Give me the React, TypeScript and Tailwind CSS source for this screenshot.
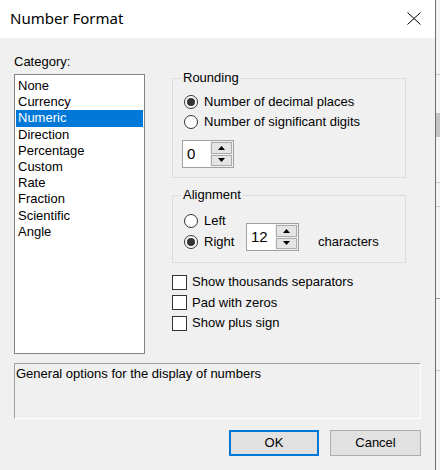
const items = ["None", "Currency", "Numeric", "Direction", "Percentage", "Custom", "Rate", "Fraction", "Scientific", "Angle"];

function Radio({ checked }: { checked?: boolean }) {
  return (
    <span className="w-[14px] h-[14px] rounded-full border border-[#333333] bg-white flex items-center justify-center shrink-0">
      {checked && <span className="w-[8px] h-[8px] rounded-full bg-[#333333]" />}
    </span>
  );
}

function Arrow({ up }: { up?: boolean }) {
  return (
    <svg width="7" height="4" viewBox="0 0 7 4">
      <path d={up ? "M0 4 L3.5 0 L7 4 Z" : "M0 0 L7 0 L3.5 4 Z"} fill="#000" />
    </svg>
  );
}

function Spin({ value, w }: { value: string; w: string }) {
  return (
    <div className={`flex h-[28px] border border-[#a0a0a0] bg-white text-[15px] ${w}`}>
      <div className="flex-1 pl-[4px] pt-[5px] leading-[16px]">{value}</div>
      <div className="w-[23px] bg-[#f0f0f0] flex flex-col gap-[1px] p-[1px]">
        <div className="flex-1 border border-[#acacac] bg-[#e5e5e5] flex items-center justify-center">
          <Arrow up />
        </div>
        <div className="flex-1 border border-[#acacac] bg-[#e5e5e5] flex items-center justify-center">
          <Arrow />
        </div>
      </div>
    </div>
  );
}

function Check({ label }: { label: string }) {
  return (
    <div className="h-[20.5px] flex items-center gap-[5px]">
      <span className="w-[15px] h-[15px] border border-[#333333] bg-white shrink-0" />
      <span>{label}</span>
    </div>
  );
}

export default function App() {
  return (
    <div className="w-[440px] h-[470px] flex overflow-hidden text-[13px] leading-[16px] text-black" style={{ fontFamily: '"Liberation Sans", Arial, sans-serif' }}>
      {/* Dialog */}
      <div className="w-[435px] flex flex-col">
        {/* Title bar */}
        <div className="h-[38px] bg-white flex items-center justify-between pl-[10px] pr-[14px]">
          <span className="text-[15px] leading-[20px] mb-[2px]" style={{ fontFamily: '"Noto Sans", "Open Sans", sans-serif' }}>
            Number Format
          </span>
          <svg width="14" height="13" viewBox="0 0 14 13" className="mb-[1px]">
            <path d="M0.5 0.5 L13.5 12.5 M13.5 0.5 L0.5 12.5" stroke="#000" strokeWidth="1" />
          </svg>
        </div>

        {/* Body */}
        <div className="flex-1 bg-[#f0f0f0] pl-[14px] pr-[14px] pt-[16px]">
          <div className="flex">
            {/* Category */}
            <div className="w-[131px]">
              <div className="h-[16px] mb-[4px]">Category:</div>
              <div className="h-[280px] border border-[#828282] bg-white pt-[3px] px-[1px]">
                {items.map((it) => (
                  <div
                    key={it}
                    className={`h-[16.2px] pl-[2px] leading-[16px] ${it === "Numeric" ? "bg-[#0078d7] text-white" : ""}`}
                  >
                    {it}
                  </div>
                ))}
              </div>
            </div>

            {/* Options */}
            <div className="w-[234px] ml-[27px] pt-[16px]">
              <fieldset className="border border-[#dcdcdc] pb-[9px]">
                <legend className="ml-[8px] px-[2px] leading-[16px]">Rounding</legend>
                <div className="pl-[11px] mt-[6px]">
                  <div className="h-[20px] flex items-center gap-[6px]">
                    <Radio checked />
                    <span>Number of decimal places</span>
                  </div>
                  <div className="h-[20px] flex items-center gap-[6px]">
                    <Radio />
                    <span>Number of significant digits</span>
                  </div>
                </div>
                <div className="pl-[9px] mt-[8px]">
                  <Spin value="0" w="w-[52px]" />
                </div>
              </fieldset>

              <fieldset className="border border-[#dcdcdc] mt-[9px] pb-[10px]">
                <legend className="ml-[8px] px-[2px] leading-[16px]">Alignment</legend>
                <div className="pl-[11px] mt-[8px] flex">
                  <div className="w-[62px] flex flex-col gap-[1px]">
                    <div className="h-[20px] flex items-center gap-[6px]">
                      <Radio />
                      <span>Left</span>
                    </div>
                    <div className="h-[20px] flex items-center gap-[6px]">
                      <Radio checked />
                      <span>Right</span>
                    </div>
                  </div>
                  <div className="self-end mb-[1px]">
                    <Spin value="12" w="w-[53px]" />
                  </div>
                  <div className="self-end h-[20px] flex items-center ml-[19px]">characters</div>
                </div>
              </fieldset>

              <div className="mt-[9px]">
                <Check label="Show thousands separators" />
                <Check label="Pad with zeros" />
                <Check label="Show plus sign" />
              </div>
            </div>
          </div>

          {/* Description */}
          <div className="mt-[9px] h-[56px] border border-t-[#a0a0a0] border-l-[#a0a0a0] border-b-white border-r-white pl-[1px] pt-[2px]">
            General options for the display of numbers
          </div>

          {/* Buttons */}
          <div className="mt-[11px] flex justify-end gap-[11px]">
            <button className="w-[90px] h-[26px] border-2 border-[#0078d7] bg-[#e1e1e1] text-[13px]">OK</button>
            <button className="w-[91px] h-[26px] border border-[#adadad] bg-[#e1e1e1] text-[13px]">Cancel</button>
          </div>
        </div>
      </div>

      {/* Background window peeking out */}
      <div className="w-[5px] border-l border-[#6e6e6e] bg-[#f4f4f4] flex flex-col">
        <div className="h-[75px] border-b border-[#c8c8c8]" />
        <div className="h-[38px]" />
        <div className="h-[24px] bg-[#c4c4c4]" />
        <div className="h-[46px] border-b border-[#c8c8c8]" />
        <div className="h-[24px] border-b border-[#c8c8c8]" />
        <div className="h-[92px] border-b border-[#9a9a9a]" />
        <div className="h-[72px] border-b border-[#c8c8c8]" />
      </div>
    </div>
  );
}
